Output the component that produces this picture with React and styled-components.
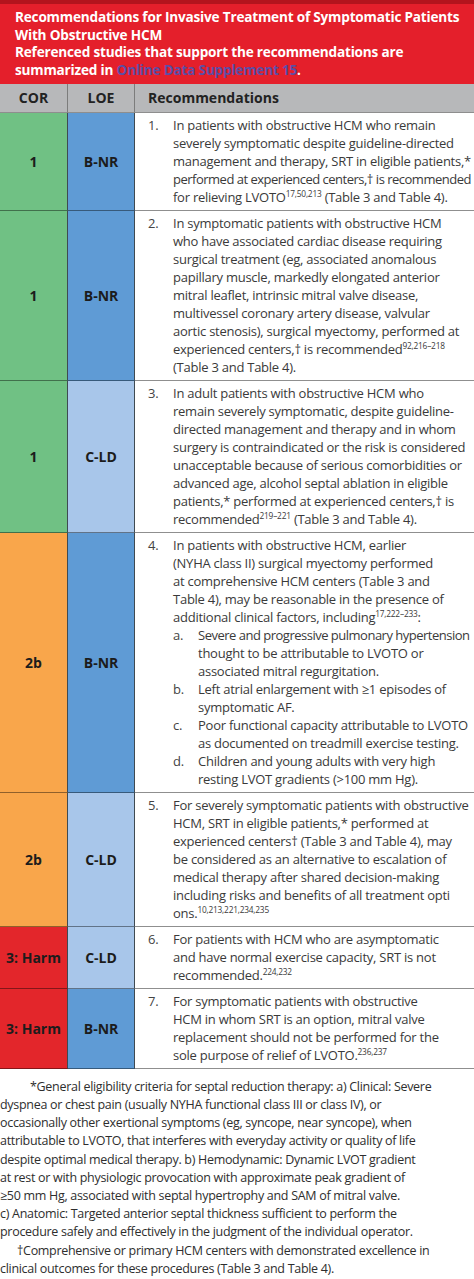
import React from "react";
import styled, { createGlobalStyle } from "styled-components";

const GlobalStyle = createGlobalStyle`
  html, body {
    margin: 0;
    padding: 0;
    background: #fff;
  }
  body {
    font-family: "Open Sans", "Noto Sans", sans-serif;
    color: #333;
  }
`;

const Page = styled.div`
  width: 474px;
  overflow: hidden;
`;

const Banner = styled.div`
  background: #e41f2b;
  border-top: 4px solid #b3141d;
  padding: 4px 8px 5px 15px;
  color: #fff;
  font-weight: 700;
  font-size: 13.6px;
  letter-spacing: -0.2px;
  line-height: 17.7px;
`;

const Line = styled.span`
  display: block;
  white-space: nowrap;
`;

// a few printed lines are set tighter than the rest
const Tight = styled.span`
  letter-spacing: -0.5px;
`;

const DataLink = styled.span`
  color: #5b4ea6;
`;

const Row = styled.div`
  display: grid;
  grid-template-columns: 68px 67px 1fr;
`;

const HeadCell = styled.div`
  display: flex;
  align-items: center;
  justify-content: ${(p) => (p.$left ? "flex-start" : "center")};
  padding-left: ${(p) => (p.$left ? "13px" : "0")};
  height: 28px;
  background: #b7b8ba;
  border-bottom: 1px solid #8e8e8e;
  border-right: ${(p) => (p.$last ? "none" : "1px solid #7c7c7c")};
  font-weight: 700;
  font-size: 14px;
  color: #222;
`;

const LevelCell = styled.div`
  display: flex;
  align-items: center;
  justify-content: center;
  background: ${(p) => p.$bg};
  border-right: 1px solid #3f4a52;
  border-bottom: 1px solid rgba(0, 0, 0, 0.42);
  font-weight: 700;
  font-size: 14px;
  color: #1c1c1c;
`;

const RecCell = styled.div`
  padding: 3px 0 4px 13px;
  border-bottom: 1px solid #8f8f8f;
  font-size: 13px;
  letter-spacing: -0.25px;
  line-height: 18px;
  color: #3a3a3a;
`;

const Item = styled.div`
  display: flex;
`;

const Num = styled.span`
  flex: 0 0 25px;
  color: #444;
`;

const Body = styled.div`
  flex: 1;
`;

const Sup = styled.sup`
  font-size: 0.64em;
  line-height: 0;
  vertical-align: 0.55em;
  letter-spacing: -0.2px;
`;

const Notes = styled.div`
  padding: 9px 0 10px 0;
  font-size: 12.5px;
  letter-spacing: -0.3px;
  line-height: 18.2px;
  color: #2e2e2e;
`;

const NoteLine = styled(Line)`
  padding-left: ${(p) => p.$indent || 0}px;
`;

const GREEN = "#70c184";
const BLUE = "#5f9bd5";
const LIGHT = "#a8c6ea";
const ORANGE = "#f9a64b";
const RED = "#e3262b";

const rows = [
  {
    cor: "1",
    corBg: GREEN,
    loe: "B-NR",
    loeBg: BLUE,
    num: "1.",
    lines: [
      "In patients with obstructive HCM who remain",
      "severely symptomatic despite guideline-directed",
      "management and therapy, SRT in eligible patients,*",
      <Tight>performed at experienced centers,† is recommended</Tight>,
      <>
        for relieving LVOTO<Sup>17,50,213</Sup> (Table 3 and Table 4).
      </>,
    ],
  },
  {
    cor: "1",
    corBg: GREEN,
    loe: "B-NR",
    loeBg: BLUE,
    num: "2.",
    lines: [
      "In symptomatic patients with obstructive HCM",
      "who have associated cardiac disease requiring",
      "surgical treatment (eg, associated anomalous",
      "papillary muscle, markedly elongated anterior",
      "mitral leaflet, intrinsic mitral valve disease,",
      "multivessel coronary artery disease, valvular",
      "aortic stenosis), surgical myectomy, performed at",
      <>
        experienced centers,† is recommended<Sup>92,216–218</Sup>
      </>,
      "(Table 3 and Table 4).",
    ],
  },
  {
    cor: "1",
    corBg: GREEN,
    loe: "C-LD",
    loeBg: LIGHT,
    num: "3.",
    lines: [
      "In adult patients with obstructive HCM who",
      "remain severely symptomatic, despite guideline-",
      "directed management and therapy and in whom",
      "surgery is contraindicated or the risk is considered",
      "unacceptable because of serious comorbidities or",
      "advanced age, alcohol septal ablation in eligible",
      "patients,* performed at experienced centers,† is",
      <>
        recommended<Sup>219–221</Sup> (Table 3 and Table 4).
      </>,
    ],
  },
  {
    cor: "2b",
    corBg: ORANGE,
    loe: "B-NR",
    loeBg: BLUE,
    num: "4.",
    lines: [
      "In patients with obstructive HCM, earlier",
      "(NYHA class II) surgical myectomy performed",
      "at comprehensive HCM centers (Table 3 and",
      "Table 4), may be reasonable in the presence of",
      <>
        additional clinical factors, including<Sup>17,222–233</Sup>:
      </>,
    ],
    subs: [
      {
        num: "a.",
        lines: [
          <Tight>Severe and progressive pulmonary hypertension</Tight>,
          "thought to be attributable to LVOTO or",
          "associated mitral regurgitation.",
        ],
      },
      {
        num: "b.",
        lines: ["Left atrial enlargement with ≥1 episodes of", "symptomatic AF."],
      },
      {
        num: "c.",
        lines: [
          "Poor functional capacity attributable to LVOTO",
          "as documented on treadmill exercise testing.",
        ],
      },
      {
        num: "d.",
        lines: [
          "Children and young adults with very high",
          "resting LVOT gradients (>100 mm Hg).",
        ],
      },
    ],
  },
  {
    cor: "2b",
    corBg: ORANGE,
    loe: "C-LD",
    loeBg: LIGHT,
    num: "5.",
    lines: [
      "For severely symptomatic patients with obstructive",
      "HCM, SRT in eligible patients,* performed at",
      "experienced centers† (Table 3 and Table 4), may",
      "be considered as an alternative to escalation of",
      "medical therapy after shared decision-making",
      "including risks and benefits of all treatment opti",
      <>
        ons.<Sup>10,213,221,234,235</Sup>
      </>,
    ],
  },
  {
    cor: "3: Harm",
    corBg: RED,
    loe: "C-LD",
    loeBg: LIGHT,
    num: "6.",
    lines: [
      "For patients with HCM who are asymptomatic",
      "and have normal exercise capacity, SRT is not",
      <>
        recommended.<Sup>224,232</Sup>
      </>,
    ],
  },
  {
    cor: "3: Harm",
    corBg: RED,
    loe: "B-NR",
    loeBg: BLUE,
    num: "7.",
    lines: [
      "For symptomatic patients with obstructive",
      "HCM in whom SRT is an option, mitral valve",
      "replacement should not be performed for the",
      <>
        sole purpose of relief of LVOTO.<Sup>236,237</Sup>
      </>,
    ],
  },
];

const notes = [
  { indent: 30, text: "*General eligibility criteria for septal reduction therapy: a) Clinical: Severe" },
  { text: "dyspnea or chest pain (usually NYHA functional class III or class IV), or" },
  { text: "occasionally other exertional symptoms (eg, syncope, near syncope), when" },
  { text: "attributable to LVOTO, that interferes with everyday activity or quality of life" },
  { text: "despite optimal medical therapy. b) Hemodynamic: Dynamic LVOT gradient" },
  { text: "at rest or with physiologic provocation with approximate peak gradient of" },
  { text: "≥50 mm Hg, associated with septal hypertrophy and SAM of mitral valve." },
  { text: "c) Anatomic: Targeted anterior septal thickness sufficient to perform the" },
  { text: "procedure safely and effectively in the judgment of the individual operator." },
  { indent: 17, text: "†Comprehensive or primary HCM centers with demonstrated excellence in" },
  { text: "clinical outcomes for these procedures (Table 3 and Table 4)." },
];

function Lines({ lines }) {
  return lines.map((l, i) => <Line key={i}>{l}</Line>);
}

function Recommendation({ row }) {
  return (
    <Row>
      <LevelCell $bg={row.corBg}>{row.cor}</LevelCell>
      <LevelCell $bg={row.loeBg}>{row.loe}</LevelCell>
      <RecCell>
        <Item>
          <Num>{row.num}</Num>
          <Body>
            <Lines lines={row.lines} />
            {row.subs &&
              row.subs.map((s) => (
                <Item key={s.num}>
                  <Num>{s.num}</Num>
                  <Body>
                    <Lines lines={s.lines} />
                  </Body>
                </Item>
              ))}
          </Body>
        </Item>
      </RecCell>
    </Row>
  );
}

export default function App() {
  return (
    <Page>
      <GlobalStyle />
      <Banner>
        <Line>Recommendations for Invasive Treatment of Symptomatic Patients</Line>
        <Line>With Obstructive HCM</Line>
        <Line>Referenced studies that support the recommendations are</Line>
        <Line>
          summarized in <DataLink>Online Data Supplement 15</DataLink>.
        </Line>
      </Banner>
      <Row>
        <HeadCell>COR</HeadCell>
        <HeadCell>LOE</HeadCell>
        <HeadCell $left $last>
          Recommendations
        </HeadCell>
      </Row>
      {rows.map((r) => (
        <Recommendation key={r.num} row={r} />
      ))}
      <Notes>
        {notes.map((n, i) => (
          <NoteLine key={i} $indent={n.indent}>
            {n.text}
          </NoteLine>
        ))}
      </Notes>
    </Page>
  );
}
